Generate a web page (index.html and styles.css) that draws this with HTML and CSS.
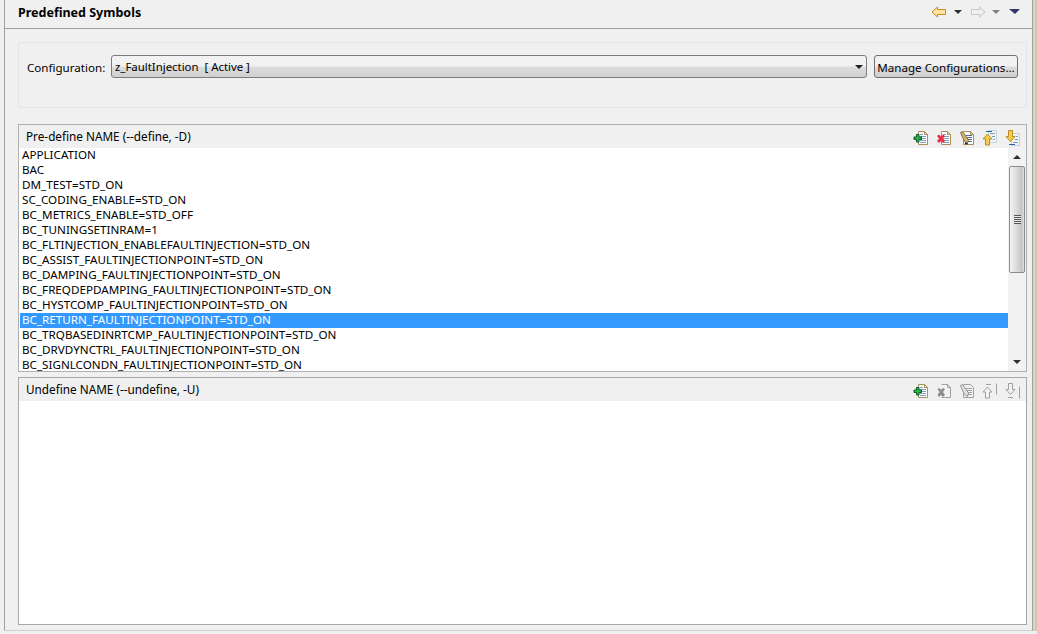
FILE: index.html
```html
<!DOCTYPE html>
<html lang="en">
<head>
<meta charset="utf-8">
<title>Predefined Symbols</title>
<link rel="stylesheet" href="styles.css">
</head>
<body>
<svg class="defs" width="0" height="0" aria-hidden="true">
  <defs>
    <symbol id="doc" viewBox="0 0 16 16">
      <path d="M5.500 1.500h6l3 3v10h-9z" fill="#fff" stroke="#a88f5c"/>
      <path d="M11.500 1.500v3h3z" fill="#f6ecc8" stroke="#a88f5c"/>
      <path d="M7 4.500h3M7 6.500h6M7 8.500h6M7 10.500h6M7 12.500h6" stroke="#7f9db9"/>
    </symbol>
    <symbol id="ico-add" viewBox="0 0 16 16">
      <use href="#doc"/>
      <path d="M3.500 4.500h2.500v2.500h2.500v2.500h-2.500v2.500h-2.500v-2.500h-2.500v-2.500h2.500z" fill="#2fb54f" stroke="#0b5a20"/>
    </symbol>
    <symbol id="ico-del" viewBox="0 0 16 16">
      <use href="#doc"/>
      <path d="M1 6l2-1.500 2 2 2-2 2 1.500-2 2.500 2 2.500-2 2-2-2-2 2-2-2 2-2.500z" fill="#e8304a"/>
    </symbol>
    <symbol id="ico-edit" viewBox="0 0 16 16">
      <path d="M4.500 1.500h7l3 3v10h-10z" fill="#fff" stroke="#a88f5c"/>
      <path d="M11.500 1.500v3h3z" fill="#f6ecc8" stroke="#a88f5c"/>
      <path d="M7 5.500h6M7 7.500h6M9 9.500h4M9 11.500h4" stroke="#4a6d9a"/>
      <path d="M1.500 2.500l2-1 6 8.500-1 3.500-3-2z" fill="#d8b070" stroke="#8a6d3c"/>
      <path d="M6 13l2.500 1" stroke="#223" stroke-width="1.500"/>
    </symbol>
    <symbol id="ico-up" viewBox="0 0 16 16">
      <path d="M6.500 .5h8v12h-8z" fill="#eef3f8" stroke="#c8d2dc"/>
      <path d="M8 3.500h5M10 6.500h3M11 9.500h2" stroke="#7f9db9"/>
      <path d="M4 1.500h6" stroke="#2a60a8"/>
      <path d="M5.500 4l4.500 5h-2.500v6h-4v-6h-2.500z" fill="#f8cc50" stroke="#b88a20"/>
    </symbol>
    <symbol id="ico-down" viewBox="0 0 16 16">
      <path d="M6.500 3.500h8v12h-8z" fill="#eef3f8" stroke="#c8d2dc"/>
      <path d="M11 6.500h2M10 9.500h3M8 12.500h5" stroke="#7f9db9"/>
      <path d="M4 14.500h6" stroke="#2a60a8"/>
      <path d="M3.500 .5h4v6h2.500l-4.500 5-4.500-5h2.500z" fill="#f8cc50" stroke="#b88a20"/>
    </symbol>
    <symbol id="off-del" viewBox="0 0 16 16">
      <path d="M5.500 1.500h6l3 3v10h-9" fill="#f2f2f2" stroke="#a0a0a0"/>
      <path d="M11.500 1.500v3h3" fill="none" stroke="#a0a0a0"/>
      <path d="M1.500 6l2-1 1.500 2 2-2 2 1-2 3 2 3-2 2-2-2-1.500 2-2-2 2-3z" fill="#8c8c8c"/>
    </symbol>
    <symbol id="off-edit" viewBox="0 0 16 16">
      <path d="M4.500 1.500h7l3 3v10h-10z" fill="#f2f2f2" stroke="#a0a0a0"/>
      <path d="M7 5.500h6M7 7.500h6M9 9.500h4M9 11.500h4" stroke="#a0a0a0"/>
      <path d="M1.500 2.500l2-1 6 8.500-1 3.500-3-2z" fill="#e4e4e4" stroke="#909090"/>
    </symbol>
    <symbol id="off-up" viewBox="0 0 16 16">
      <path d="M14.500 .5v11" stroke="#a0a0a0"/>
      <path d="M4 1.500h5" stroke="#a0a0a0"/>
      <path d="M5.500 4l4.500 5h-2.500v6h-4v-6h-2.500z" fill="#f2f2f2" stroke="#a0a0a0"/>
    </symbol>
    <symbol id="off-down" viewBox="0 0 16 16">
      <path d="M14.500 3.500v12" stroke="#a0a0a0"/>
      <path d="M3 14.500h5" stroke="#a0a0a0"/>
      <path d="M3.500 .5h4v6h2.500l-4.500 5-4.500-5h2.500z" fill="#f2f2f2" stroke="#a0a0a0"/>
    </symbol>
  </defs>
</svg>

<div class="window">
  <main class="page">
    <header class="title-bar">
      <h1 class="title">Predefined Symbols</h1>
      <div class="nav">
        <svg class="nav-arrow" viewBox="0 0 16 12"><path d="M6.500 1L1 6l5.500 5V8.500h8v-5h-8z" fill="#fde4a0" stroke="#c98a1c"/></svg>
        <span class="tri tri-dark"></span>
        <svg class="nav-arrow nav-next" viewBox="0 0 16 12"><path d="M9.500 1l5.500 5-5.500 5V8.500h-8v-5h8z" fill="#f0f0ee" stroke="#c6c8c4"/></svg>
        <span class="tri tri-gray"></span>
        <span class="tri tri-navy"></span>
      </div>
    </header>

    <section class="config">
      <label class="config-label">Configuration:</label>
      <div class="combo">
        <span class="combo-text">z_FaultInjection&nbsp; [ Active ]</span>
        <span class="tri tri-combo"></span>
      </div>
      <button class="manage">Manage Configurations...</button>
    </section>

    <section class="panel panel-define">
      <div class="panel-head">
        <span class="panel-title">Pre-define NAME (--define, -D)</span>
        <div class="tools">
          <svg class="tool"><use href="#ico-add"/></svg>
          <svg class="tool"><use href="#ico-del"/></svg>
          <svg class="tool"><use href="#ico-edit"/></svg>
          <svg class="tool"><use href="#ico-up"/></svg>
          <svg class="tool"><use href="#ico-down"/></svg>
        </div>
      </div>
      <div class="list-wrap">
        <ul class="list">
          <li>APPLICATION</li>
          <li>BAC</li>
          <li>DM_TEST=STD_ON</li>
          <li>SC_CODING_ENABLE=STD_ON</li>
          <li>BC_METRICS_ENABLE=STD_OFF</li>
          <li>BC_TUNINGSETINRAM=1</li>
          <li>BC_FLTINJECTION_ENABLEFAULTINJECTION=STD_ON</li>
          <li>BC_ASSIST_FAULTINJECTIONPOINT=STD_ON</li>
          <li>BC_DAMPING_FAULTINJECTIONPOINT=STD_ON</li>
          <li>BC_FREQDEPDAMPING_FAULTINJECTIONPOINT=STD_ON</li>
          <li>BC_HYSTCOMP_FAULTINJECTIONPOINT=STD_ON</li>
          <li class="selected">BC_RETURN_FAULTINJECTIONPOINT=STD_ON</li>
          <li>BC_TRQBASEDINRTCMP_FAULTINJECTIONPOINT=STD_ON</li>
          <li>BC_DRVDYNCTRL_FAULTINJECTIONPOINT=STD_ON</li>
          <li>BC_SIGNLCONDN_FAULTINJECTIONPOINT=STD_ON</li>
        </ul>
        <div class="scrollbar">
          <span class="sb-btn"><span class="tri tri-up"></span></span>
          <div class="sb-track">
            <div class="sb-thumb"><span class="grip"></span></div>
          </div>
          <span class="sb-btn"><span class="tri tri-down"></span></span>
        </div>
      </div>
    </section>

    <section class="panel panel-undefine">
      <div class="panel-head">
        <span class="panel-title">Undefine NAME (--undefine, -U)</span>
        <div class="tools">
          <svg class="tool"><use href="#ico-add"/></svg>
          <svg class="tool"><use href="#off-del"/></svg>
          <svg class="tool"><use href="#off-edit"/></svg>
          <svg class="tool"><use href="#off-up"/></svg>
          <svg class="tool"><use href="#off-down"/></svg>
        </div>
      </div>
      <div class="empty-list"></div>
    </section>
  </main>
</div>
</body>
</html>
```

FILE: styles.css
```css
* { box-sizing: border-box; }

html, body {
  margin: 0;
  height: 100%;
  overflow: hidden;
}

body {
  background: #f0f0f0;
  font: 11.6px/15px "Noto Sans", sans-serif;
  color: #000;
}

.defs { position: absolute; }

.window {
  height: 634px;
  padding-left: 4px;
  background: #f0f0f0;
}

.page {
  width: 1029px;
  height: 631px;
  border-left: 1px solid #a0a0a0;
  border-right: 1px solid #a0a0a0;
  border-bottom: 1px solid #d0d0d0;
  box-shadow: 2px 0 0 #dcd6c0, 4px 0 0 #cfc7a9;
  display: flex;
  flex-direction: column;
  background: #f0f0f0;
}

.title-bar {
  height: 29px;
  flex: none;
  display: flex;
  align-items: center;
  justify-content: space-between;
  padding: 0 12px 5px 13px;
  border-bottom: 1px solid #a0a0a0;
}

.title {
  margin: 0;
  padding-top: 2px;
  font-size: 12.5px;
  font-weight: 700;
}

.nav {
  display: flex;
  align-items: center;
}

.nav-arrow {
  width: 16px;
  height: 12px;
  margin-right: 7px;
}

.nav-next { margin-left: 8px; margin-right: 6px; }

.tri {
  display: block;
  width: 0;
  height: 0;
  border-left: 4px solid transparent;
  border-right: 4px solid transparent;
  border-top: 4px solid #303030;
}

.tri-gray { border-top-color: #808080; margin-right: 9px; }
.tri-navy { border-left-width: 6px; border-right-width: 5px; border-top: 5px solid #35356a; }
.tri-combo { border-top-color: #222; }

.config {
  flex: none;
  height: 66px;
  margin: 13px 5px 0 13px;
  padding: 12px 0 0 8px;
  border: 1px solid #dfe6ee;
  border-radius: 3px;
  background: #f0f0f0;
  display: flex;
  align-items: flex-start;
}

.config-label {
  margin-top: 5px;
  width: 84px;
  flex: none;
}

.combo {
  width: 756px;
  height: 23px;
  flex: none;
  padding: 0 3px;
  display: flex;
  align-items: center;
  justify-content: space-between;
  border: 1px solid #7c7c7c;
  border-radius: 3px;
  background: linear-gradient(#f2f2f2 0 45%, #dcdcdc 55%, #cfcfcf);
}

.combo-text { margin-top: -1px; font-size: 11.4px; }

.manage {
  width: 144px;
  height: 23px;
  flex: none;
  margin-left: 7px;
  padding: 1px 0 0;
  font: inherit;
  white-space: nowrap;
  color: #000;
  border: 1px solid #707070;
  border-radius: 3px;
  background: linear-gradient(#f2f2f2 0 45%, #dcdcdc 55%, #cfcfcf);
}

.panel {
  flex: none;
  width: 1009px;
  height: 248px;
  margin-left: 13px;
  border: 1px solid #a8a8a8;
  display: flex;
  flex-direction: column;
  background: #fff;
}

.panel-define { margin-top: 16px; border-color: #b0b0b0; }
.panel-undefine { margin-top: 5px; }

.panel-head {
  flex: none;
  height: 23px;
  display: flex;
  align-items: center;
  justify-content: space-between;
  padding: 0 5px 0 7px;
  background: #f0f0f0;
}

.panel-title { font-size: 11.75px; }

.tools {
  display: flex;
  gap: 7px;
  padding-top: 2px;
}

.tool {
  width: 16px;
  height: 16px;
  display: block;
}

.list-wrap {
  flex: 1;
  display: flex;
  min-height: 0;
}

.list {
  flex: 1;
  margin: 0;
  padding: 0 0 0 1px;
  list-style: none;
  overflow: hidden;
  background: #fff;
  font-size: 11.65px;
}

.list li {
  height: 15px;
  line-height: 14px;
  padding-left: 2px;
  white-space: nowrap;
}

.list .selected {
  background: #3399ff;
  color: #fff;
}

.scrollbar {
  flex: none;
  width: 18px;
  display: flex;
  flex-direction: column;
  background: #f2f2f2;
}

.sb-btn {
  flex: none;
  height: 18px;
  display: flex;
  align-items: center;
  justify-content: center;
}

.tri-up {
  border-top: 0;
  border-bottom: 4px solid #303030;
}

.sb-track {
  flex: 1;
  min-height: 0;
}

.sb-thumb {
  height: 107px;
  margin: 0 1px;
  border: 1px solid #8c8c8c;
  border-radius: 2px;
  background: linear-gradient(90deg, #f4f4f4, #dedede 40%, #c4c4c4 85%, #e4e4e4);
  display: flex;
  align-items: center;
  justify-content: center;
}

.grip {
  display: block;
  width: 7px;
  height: 9px;
  background: repeating-linear-gradient(#555 0 1px, #e8e8e8 1px 2px);
}

.empty-list {
  flex: 1;
  background: #fff;
}
```
